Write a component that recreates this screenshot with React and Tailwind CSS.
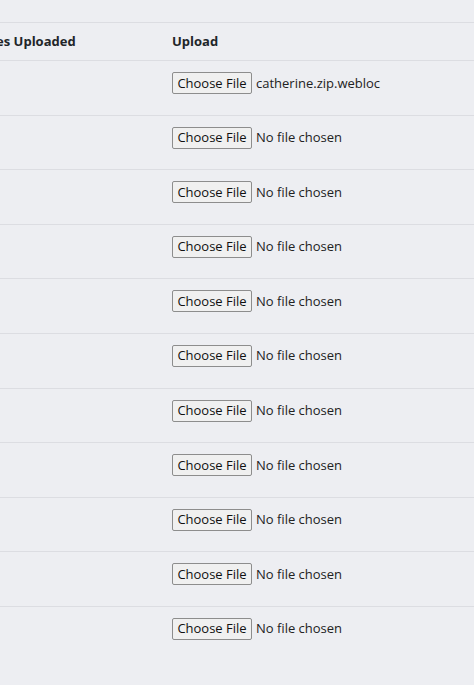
const rows = [
  "catherine.zip.webloc",
  "No file chosen",
  "No file chosen",
  "No file chosen",
  "No file chosen",
  "No file chosen",
  "No file chosen",
  "No file chosen",
  "No file chosen",
  "No file chosen",
  "No file chosen",
];

function FileField({ name }) {
  return (
    <div className="flex items-center gap-[4px] h-[22px]">
      <span className="h-[22px] w-[80px] flex items-center justify-center rounded-[2px] border border-[#8d8d8d] bg-[#f0f0f0] text-[13px] text-[#111] leading-none">
        Choose File
      </span>
      <span className="text-[13px] text-[#222] leading-none">{name}</span>
    </div>
  );
}

export default function App() {
  return (
    <div
      className="w-[474px] h-[685px] overflow-hidden bg-[#edeef2] pt-[22px]"
      style={{ fontFamily: '"Open Sans", "Noto Sans", sans-serif' }}
    >
      <div className="h-[39px] flex items-center border-y border-[#dcdde2] text-[13px] font-bold text-[#212529]">
        <div className="w-[172px] whitespace-nowrap">
          <span className="ml-[-19px]">Files Uploaded</span>
        </div>
        <div>Upload</div>
      </div>
      {rows.map((name, i) => (
        <div
          key={i}
          className={`h-[54.6px] flex items-start pt-[11px] ${i < rows.length - 1 ? "border-b border-[#dcdde2]" : ""}`}
        >
          <div className="w-[172px]" />
          <FileField name={name} />
        </div>
      ))}
    </div>
  );
}
